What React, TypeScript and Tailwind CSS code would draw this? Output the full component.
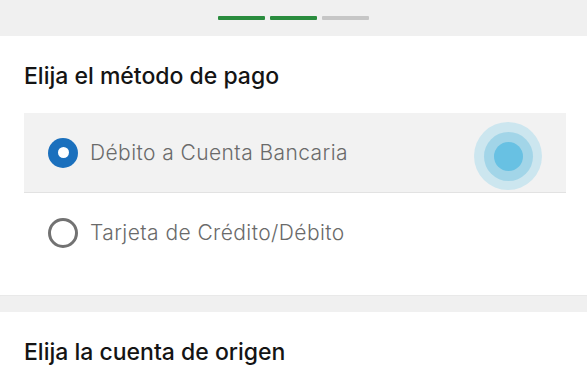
import { useState } from "react";

const METHODS = [
  { id: "debito", label: "Débito a Cuenta Bancaria" },
  { id: "tarjeta", label: "Tarjeta de Crédito/Débito" },
];

function Radio({ checked }: { checked: boolean }) {
  if (checked) {
    return (
      <span className="flex h-[30px] w-[30px] shrink-0 items-center justify-center rounded-full bg-[#1b70bd]">
        <span className="h-[11px] w-[11px] rounded-full bg-white" />
      </span>
    );
  }
  return <span className="h-[30px] w-[30px] shrink-0 rounded-full border-[3px] border-[#727272]" />;
}

export default function App() {
  const [selected, setSelected] = useState("debito");

  return (
    <div className="min-h-screen bg-white font-['Inter',sans-serif]">
      {/* progress */}
      <div className="flex h-[36px] items-start justify-center gap-[5px] bg-[#f0f0f0] pt-[16px]">
        <span className="h-[4px] w-[47px] rounded-[1px] bg-[#2a8c3e]" />
        <span className="h-[4px] w-[47px] rounded-[1px] bg-[#2a8c3e]" />
        <span className="h-[4px] w-[47px] rounded-[1px] bg-[#c6c6c6]" />
      </div>

      <section className="pb-[22px] pl-[24px] pr-[21px] pt-[26px]">
        <h2 className="text-[23px] font-medium leading-[28px] text-[#141414]">Elija el método de pago</h2>
        <div className="mt-[23px]">
          {METHODS.map((m) => {
            const active = selected === m.id;
            return (
              <button
                key={m.id}
                type="button"
                onClick={() => setSelected(m.id)}
                className={`relative flex h-[80px] w-full items-center gap-[12px] px-[24px] text-left ${
                  active ? "border-b border-[#e2e2e2] bg-[#f2f2f2]" : "bg-white"
                }`}
              >
                <Radio checked={active} />
                <span className="text-[21px] font-light tracking-[0.02em] text-[#6a6a6a]">{m.label}</span>
                {active && (
                  <span className="absolute right-[24px] top-[9px] flex h-[68px] w-[68px] items-center justify-center rounded-full bg-[#cce6ef]">
                    <span className="flex h-[49px] w-[49px] items-center justify-center rounded-full bg-[#a2d5e8]">
                      <span className="h-[29px] w-[29px] rounded-full bg-[#68c1e3]" />
                    </span>
                  </span>
                )}
              </button>
            );
          })}
        </div>
      </section>

      <div className="h-[17px] bg-[#f0f0f0] shadow-[inset_0_1px_1px_rgba(0,0,0,0.03)]" />

      <section className="px-[24px] pt-[26px]">
        <h2 className="text-[23px] font-medium leading-[28px] text-[#141414]">Elija la cuenta de origen</h2>
      </section>
    </div>
  );
}
